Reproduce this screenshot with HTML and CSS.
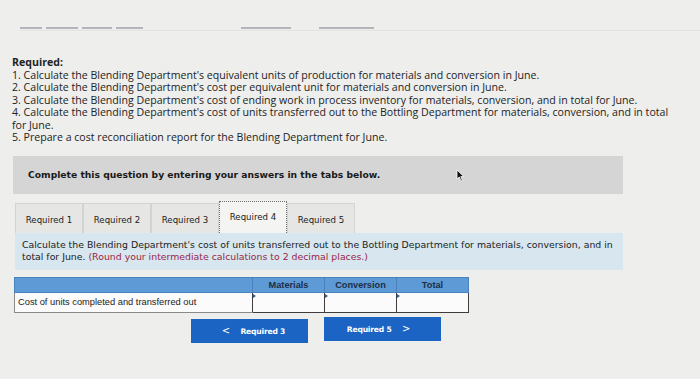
FILE: index.html
```html
<!DOCTYPE html>
<html>
<head>
<meta charset="utf-8">
<link rel="stylesheet" href="styles.css">
</head>
<body>
<div class="page">
  <div class="topstrip">
    <span class="blur b1"></span><span class="blur b2"></span><span class="blur b3"></span><span class="blur b4"></span>
    <span class="gap"></span>
    <span class="blur b5"></span>
    <span class="gap2"></span>
    <span class="blur b6"></span>
  </div>

  <div class="required">
    <div class="req-title">Required:</div>
    <div>1. Calculate the Blending Department's equivalent units of production for materials and conversion in June.</div>
    <div>2. Calculate the Blending Department's cost per equivalent unit for materials and conversion in June.</div>
    <div>3. Calculate the Blending Department's cost of ending work in process inventory for materials, conversion, and in total for June.</div>
    <div>4. Calculate the Blending Department's cost of units transferred out to the Bottling Department for materials, conversion, and in total for June.</div>
    <div>5. Prepare a cost reconciliation report for the Blending Department for June.</div>
  </div>

  <div class="complete">
    Complete this question by entering your answers in the tabs below.
    <svg class="cursor" width="9" height="13" viewBox="0 0 9 13"><path d="M1 1 L1 10 L3.3 8 L5 12 L6.4 11.4 L4.8 7.6 L7.8 7.6 Z" fill="#111" stroke="#fff" stroke-width="0.8"/></svg>
  </div>

  <div class="tabs">
    <div class="tab">Required 1</div>
    <div class="tab">Required 2</div>
    <div class="tab">Required 3</div>
    <div class="tab active">Required 4</div>
    <div class="tab">Required 5</div>
  </div>

  <div class="instr">
    Calculate the Blending Department's cost of units transferred out to the Bottling Department for materials, conversion, and in total for June. <span class="round">(Round your intermediate calculations to 2 decimal places.)</span>
  </div>

  <table class="grid">
    <tr class="head">
      <th class="c-label"></th>
      <th class="c-num">Materials</th>
      <th class="c-num">Conversion</th>
      <th class="c-num">Total</th>
    </tr>
    <tr class="row">
      <td class="c-label">Cost of units completed and transferred out</td>
      <td class="c-input"><span class="mark"></span></td>
      <td class="c-input"><span class="mark"></span></td>
      <td class="c-input"><span class="mark"></span></td>
    </tr>
  </table>

  <div class="nav">
    <div class="btn prev"><span class="chev">&lt;</span> Required 3</div>
    <div class="btn next">Required 5 <span class="chev">&gt;</span></div>
  </div>
</div>
</body>
</html>
```

FILE: styles.css
```css
html, body {
  margin: 0;
  padding: 0;
  background: #eeeeec;
}
.page {
  width: 700px;
  height: 379px;
  overflow: hidden;
  font-family: "Open Sans", "Liberation Sans", Arial, sans-serif;
  color: #222;
}
.topstrip {
  margin: 26px 0 0 20px;
  height: 4px;
  display: flex;
  align-items: center;
  gap: 4px;
  width: 680px;
  border-bottom: 1px solid #e2e2e0;
}
.blur {
  display: block;
  height: 2px;
  background: #b3b5b8;
}
.b1 { width: 22px; }
.b2 { width: 32px; }
.b3 { width: 30px; }
.b4 { width: 27px; }
.gap { width: 90px; }
.b5 { width: 50px; }
.gap2 { width: 20px; }
.b6 { width: 55px; }
.required {
  margin: 25px 0 0 12px;
  font-size: 10.6px;
  line-height: 12.5px;
  width: 662px;
  color: #232323;
}
.req-title {
  font-weight: bold;
}
.complete {
  position: relative;
  margin: 12px 0 0 13px;
  width: 595px;
  height: 38px;
  padding-left: 15px;
  background: #d4d5d4;
  font-family: "DejaVu Sans", Verdana, sans-serif;
  font-weight: bold;
  font-size: 9.2px;
  line-height: 38px;
  color: #1a1a1a;
}
.cursor {
  position: absolute;
  left: 443px;
  top: 13px;
}
.tabs {
  display: flex;
  margin: 9px 0 0 15px;
  height: 30px;
}
.tab {
  width: 68px;
  border: 1px solid #d3d3d3;
  border-bottom: none;
  background: #e6e6e5;
  font-family: "DejaVu Sans", Verdana, sans-serif;
  font-size: 8.6px;
  color: #222;
  text-align: center;
  line-height: 32px;
  box-sizing: border-box;
}
.tab.active {
  background: #f4f4f3;
  border: 1px dotted #707070;
  border-bottom: none;
  line-height: 30px;
  margin-top: -2px;
  height: 32px;
}
.instr {
  margin: 0 0 0 15px;
  width: 601px;
  padding: 6px 0 7px 7px;
  background: #d7e6ef;
  font-family: "DejaVu Sans", Verdana, sans-serif;
  font-size: 9.35px;
  line-height: 12px;
  color: #222;
}
.round {
  color: #9b2545;
}
.grid {
  margin: 7px 0 0 14px;
  border-collapse: collapse;
  font-family: "Liberation Sans", Arial, sans-serif;
  font-size: 9.3px;
}
.grid th, .grid td {
  padding: 0;
  box-sizing: border-box;
}
.head th {
  height: 15px;
  background: #5d9ad6;
  border: 1px solid #4a82bd;
  color: #1d2f45;
  font-weight: bold;
  text-align: center;
  font-size: 9.2px;
}
.c-label { width: 238px; }
.c-num { width: 72px; }
.row td {
  height: 20px;
  background: #fbfbfb;
  border: 1px solid #8a8a8a;
}
.row td.c-label {
  border-right: none;
  padding-left: 3px;
  color: #222;
}
.row td.c-input {
  border: 1.5px solid #3d3d3d;
  position: relative;
  vertical-align: top;
}
.mark {
  position: absolute;
  left: 0;
  top: 1px;
  width: 0;
  height: 0;
  border-top: 2.5px solid transparent;
  border-bottom: 2.5px solid transparent;
  border-left: 3px solid #2f5f8f;
}
.nav {
  display: flex;
  gap: 16px;
  margin: 6px 0 0 191px;
  align-items: flex-start;
}
.btn {
  width: 117px;
  height: 24px;
  background: #1b64c3;
  color: #fff;
  font-family: "DejaVu Sans", Verdana, sans-serif;
  font-weight: bold;
  font-size: 7.6px;
  line-height: 24px;
  text-align: center;
  letter-spacing: -0.2px;
}
.btn.next {
  margin-top: -2px;
}
.chev {
  font-weight: normal;
  font-size: 10px;
  margin: 0 8px;
}
```
